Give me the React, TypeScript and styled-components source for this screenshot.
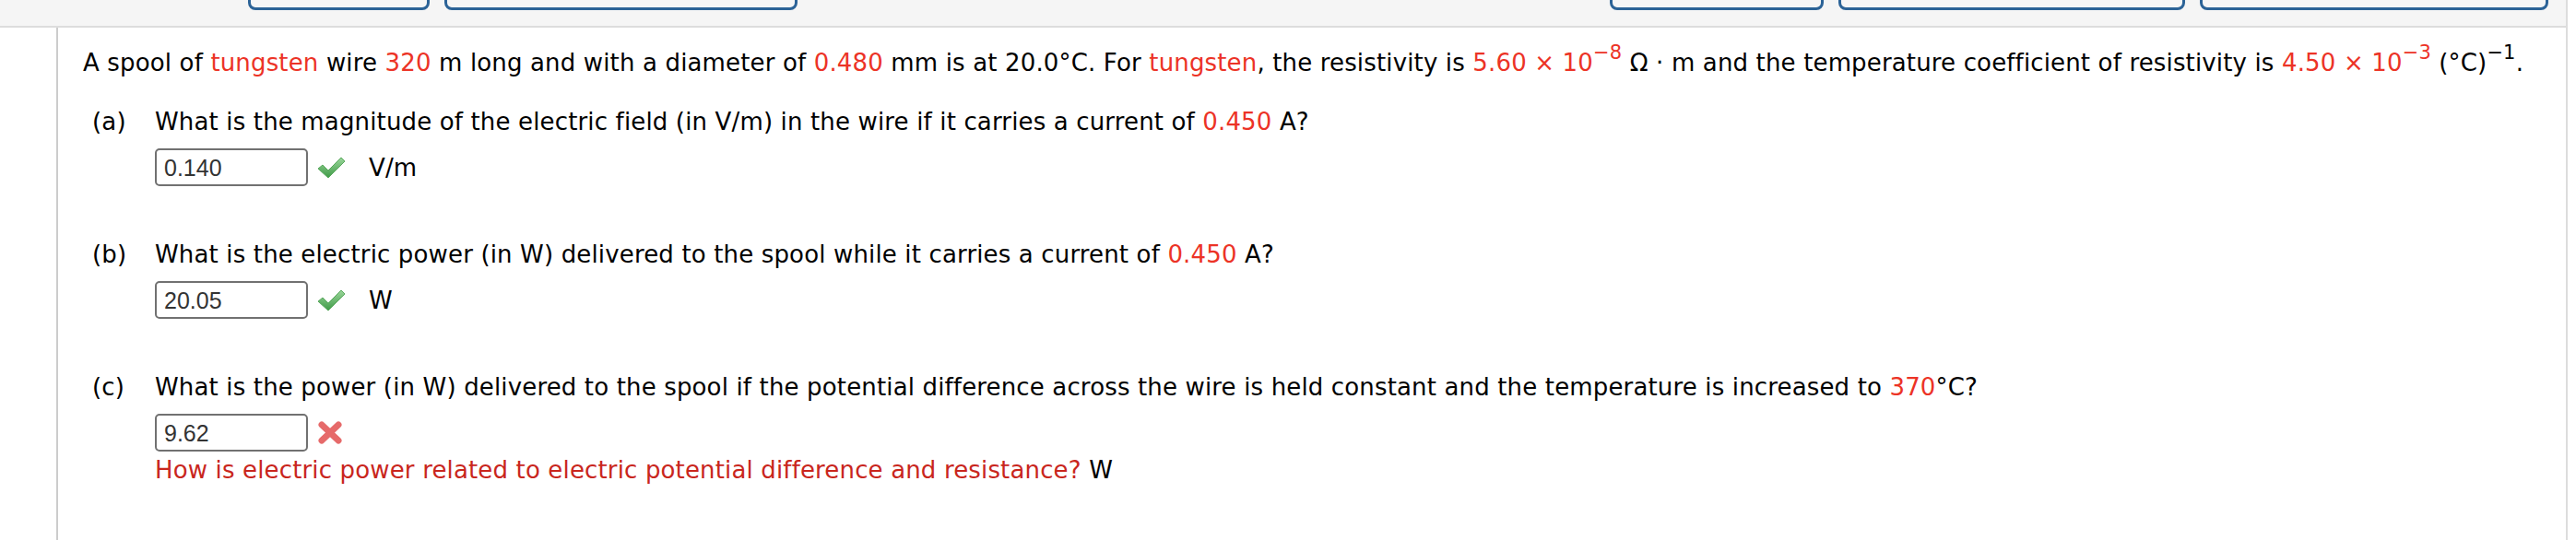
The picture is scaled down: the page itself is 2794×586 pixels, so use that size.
import React from "react"
import styled, { createGlobalStyle } from "styled-components"

const GlobalStyle = createGlobalStyle`
  html, body {
    margin: 0;
    padding: 0;
    background: #fff;
  }
  body {
    font-family: "DejaVu Sans", Verdana, sans-serif;
    font-size: 26px;
    letter-spacing: 0.15px;
    color: #000;
  }
`

const RED = "#ec3326"

const Page = styled.div`
  width: 2785px;
`

const TopBar = styled.div`
  height: 30px;
  box-sizing: border-box;
  background: #f5f5f5;
  border-bottom: 2px solid #dddddd;
  border-right: 2px solid #dddddd;
  display: flex;
  justify-content: space-between;
  align-items: flex-end;
  padding: 0 19px 19px 269px;
  overflow: hidden;
`

const ButtonGroup = styled.div`
  display: flex;
  gap: 16px;
  margin-bottom: -2px;
`

const TabButton = styled.div<{ $w: number }>`
  width: ${({ $w }) => $w}px;
  height: 40px;
  box-sizing: border-box;
  border: 3px solid #2c6397;
  border-radius: 8px;
  background: #f6f6f6;
`

const Panel = styled.div`
  margin-left: 61px;
  border-left: 2px solid #cccccc;
  border-right: 2px solid #dddddd;
  min-height: 556px;
  box-sizing: border-box;
  padding: 20px 0 0 27px;
  line-height: 36px;
`

const Statement = styled.div`
  white-space: nowrap;
`

const Hi = styled.span`
  color: ${RED};
`

const Sup = styled.span<{ $red?: boolean }>`
  font-size: 21px;
  line-height: 0;
  vertical-align: 13px;
  color: ${({ $red }) => ($red ? RED : "inherit")};
`

const PartRow = styled.div`
  display: grid;
  grid-template-columns: 78px 1fr;
  margin-top: 56px;
  &:first-of-type {
    margin-top: 28px;
  }
`

const Label = styled.div`
  padding-left: 10px;
`

const Body = styled.div`
  display: flex;
  flex-direction: column;
`

const AnswerRow = styled.div`
  display: flex;
  align-items: center;
  margin-top: 11px;
  height: 41px;
`

const Input = styled.div`
  width: 166px;
  height: 41px;
  box-sizing: border-box;
  border: 2px solid #717171;
  border-radius: 5px;
  padding: 0 8px;
  font-family: "Liberation Sans", Arial, sans-serif;
  font-size: 25px;
  letter-spacing: 0;
  color: #333;
  display: flex;
  align-items: center;
`

const Mark = styled.span`
  display: inline-flex;
  margin-left: 10px;
`

const Unit = styled.span`
  margin-left: 25px;
`

const Feedback = styled.div`
  color: #c9261d;
  margin-top: 2px;
  span {
    color: #000;
  }
`

function Check() {
  return (
    <Mark>
      <svg width="31" height="27" viewBox="0 0 31 27">
        <defs>
          <linearGradient id="ck" x1="0" y1="0" x2="0" y2="1">
            <stop offset="0" stopColor="#9ad69a" />
            <stop offset="1" stopColor="#3f9a47" />
          </linearGradient>
        </defs>
        <path
          d="M1 15 L6 11 L12 17 L26 3 L30 7 L12 25 Z"
          fill="url(#ck)"
          stroke="#5aa95e"
          strokeWidth="1"
          strokeLinejoin="round"
        />
      </svg>
    </Mark>
  )
}

function Cross() {
  return (
    <Mark>
      <svg width="28" height="27" viewBox="0 0 28 27">
        <g stroke="#e66a6a" strokeWidth="7" strokeLinecap="round">
          <line x1="5" y1="5" x2="23" y2="22" />
          <line x1="23" y1="5" x2="5" y2="22" />
        </g>
      </svg>
    </Mark>
  )
}

interface PartProps {
  label: string
  question: React.ReactNode
  value: string
  correct: boolean
  unit: string
  hint?: string
}

function Part({ label, question, value, correct, unit, hint }: PartProps) {
  return (
    <PartRow>
      <Label>{label}</Label>
      <Body>
        <div>{question}</div>
        <AnswerRow>
          <Input>{value}</Input>
          {correct ? <Check /> : <Cross />}
          {correct && <Unit>{unit}</Unit>}
        </AnswerRow>
        {hint && (
          <Feedback>
            {hint} <span>{unit}</span>
          </Feedback>
        )}
      </Body>
    </PartRow>
  )
}

export default function App() {
  return (
    <Page>
      <GlobalStyle />
      <TopBar>
        <ButtonGroup>
          <TabButton $w={197} />
          <TabButton $w={383} />
        </ButtonGroup>
        <ButtonGroup>
          <TabButton $w={232} />
          <TabButton $w={376} />
          <TabButton $w={378} />
        </ButtonGroup>
      </TopBar>
      <Panel>
        <Statement>
          A spool of <Hi>tungsten</Hi> wire <Hi>320</Hi> m long and with a diameter of{" "}
          <Hi>0.480</Hi> mm is at 20.0°C. For <Hi>tungsten</Hi>, the resistivity is{" "}
          <Hi>5.60 × 10</Hi>
          <Sup $red>−8</Sup> Ω · m and the temperature coefficient of resistivity is{" "}
          <Hi>4.50 × 10</Hi>
          <Sup $red>−3</Sup> (°C)<Sup>−1</Sup>.
        </Statement>
        <div>
          <Part
            label="(a)"
            question={
              <>
                What is the magnitude of the electric field (in V/m) in the wire if it carries a
                current of <Hi>0.450</Hi> A?
              </>
            }
            value="0.140"
            correct
            unit="V/m"
          />
          <Part
            label="(b)"
            question={
              <>
                What is the electric power (in W) delivered to the spool while it carries a current
                of <Hi>0.450</Hi> A?
              </>
            }
            value="20.05"
            correct
            unit="W"
          />
          <Part
            label="(c)"
            question={
              <>
                What is the power (in W) delivered to the spool if the potential difference across
                the wire is held constant and the temperature is increased to <Hi>370</Hi>°C?
              </>
            }
            value="9.62"
            correct={false}
            unit="W"
            hint="How is electric power related to electric potential difference and resistance?"
          />
        </div>
      </Panel>
    </Page>
  )
}
